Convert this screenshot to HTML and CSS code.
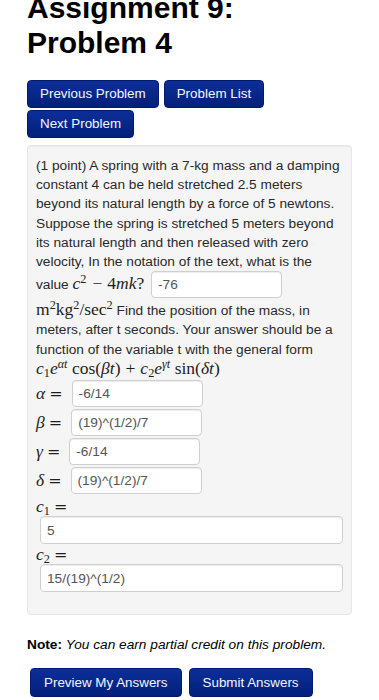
FILE: index.html
```html
<!DOCTYPE html>
<html lang="en">
<head>
<meta charset="utf-8">
<title>Assignment 9: Problem 4</title>
<link rel="stylesheet" href="styles.css">
</head>
<body>
<h1 class="title">Assignment 9:<br>Problem 4</h1>
<div class="nav">
  <button class="btn">Previous Problem</button>
  <button class="btn">Problem List</button>
  <button class="btn">Next Problem</button>
</div>
<div class="panel">
  <p class="q">(1 point) A spring with a 7-kg mass and a damping constant 4 can be held stretched 2.5 meters beyond its natural length by a force of 5 newtons. Suppose the spring is stretched 5 meters beyond its natural length and then released with zero velocity, In the notation of the text, what is the value <span class="m"><i>c</i><sup>2</sup><span class="op op-wide">−</span>4<i>mk</i>?</span> <input class="ans ans-inline" value="-76"> <span class="m">m<sup>2</sup>kg<sup>2</sup>/sec<sup>2</sup></span> Find the position of the mass, in meters, after t seconds. Your answer should be a function of the variable t with the general form <span class="m"><i>c</i><sub>1</sub><i>e</i><sup><i>αt</i></sup> cos(<i>βt</i>)<span class="op">+</span><i>c</i><sub>2</sub><i>e</i><sup><i>γt</i></sup> sin(<i>δt</i>)</span></p>
  <div class="row row-first"><span class="m lbl"><i>α</i><span class="eq">=</span></span><input class="ans ans-short" value="-6/14"></div>
  <div class="row"><span class="m lbl"><i>β</i><span class="eq">=</span></span><input class="ans ans-short" value="(19)^(1/2)/7"></div>
  <div class="row"><span class="m lbl"><i>γ</i><span class="eq">=</span></span><input class="ans ans-short" value="-6/14"></div>
  <div class="row"><span class="m lbl"><i>δ</i><span class="eq">=</span></span><input class="ans ans-short" value="(19)^(1/2)/7"></div>
  <div class="m clabel"><i>c</i><sub>1</sub><span class="eq">=</span></div>
  <input class="ans ans-wide" value="5">
  <div class="m clabel clabel-next"><i>c</i><sub>2</sub><span class="eq">=</span></div>
  <input class="ans ans-wide" value="15/(19)^(1/2)">
</div>
<p class="note"><b>Note:</b> <i>You can earn partial credit on this problem.</i></p>
<div class="actions">
  <button class="btn btn-lg">Preview My Answers</button>
  <button class="btn btn-lg">Submit Answers</button>
</div>
</body>
</html>
```
FILE: styles.css
```css
html, body {
  margin: 0;
  padding: 0;
  background: #ffffff;
}
body {
  padding: 0 27px;
  font-family: "Liberation Sans", Arial, sans-serif;
  font-size: 13.7px;
  line-height: 19.2px;
  color: #333333;
  overflow: hidden;
}
.title {
  margin: -10px 0 0;
  font-size: 30px;
  line-height: 35px;
  font-weight: bold;
  color: #000000;
}
.nav {
  display: flex;
  flex-wrap: wrap;
  gap: 2px 5px;
  margin-top: 20px;
}
.btn {
  height: 28px;
  padding: 0 12px;
  border: 1px solid #011a6b;
  border-radius: 4px;
  background: linear-gradient(to bottom, #0c2e98 0%, #02207a 100%);
  color: #f4f6ff;
  font-family: "Liberation Sans", Arial, sans-serif;
  font-size: 13.4px;
  line-height: 26px;
  cursor: pointer;
}
.panel {
  margin-top: 7px;
  padding: 10px 8px 22px;
  background: #f5f5f5;
  border: 1px solid #e6e6e6;
  border-radius: 4px;
  box-shadow: inset 0 1px 1px rgba(0,0,0,0.04);
}
.q {
  margin: 0;
  color: #2a2a2a;
}
.m {
  font-family: "Liberation Serif", "Times New Roman", serif;
  font-size: 17.5px;
  color: #1e1e1e;
}
.m i {
  font-style: italic;
}
.m sup {
  font-size: 0.7em;
  vertical-align: 0.5em;
  line-height: 0;
}
.m sub {
  font-size: 0.7em;
  vertical-align: -0.25em;
  line-height: 0;
}
.op {
  padding: 0 5px;
}
.op-wide {
  padding: 0 5px 0 6px;
}
.ans {
  box-sizing: border-box;
  height: 27px;
  padding: 0 6px;
  border: 1px solid #cfcfcf;
  border-radius: 4px;
  background: #ffffff;
  box-shadow: inset 0 1px 1px rgba(0,0,0,0.07);
  font-family: "Liberation Sans", Arial, sans-serif;
  font-size: 13.7px;
  color: #555555;
}
.ans-inline {
  width: 131px;
  margin: 0 0 2px 3px;
  vertical-align: baseline;
}
.row {
  display: flex;
  align-items: center;
  margin-top: 2px;
}
.row-first {
  margin-top: 1px;
}
.lbl {
  display: inline-block;
  margin-right: 9px;
  line-height: 19.2px;
}
.eq {
  font-family: "DejaVu Serif", serif;
  font-style: normal;
  font-size: 16px;
  padding-left: 4px;
}
.ans-short {
  width: 131px;
}
.clabel {
  margin-top: 2px;
  line-height: 20px;
  height: 20px;
}
.clabel-next {
  margin-top: 0;
}
.ans-wide {
  display: block;
  width: 303px;
  height: 28px;
  margin-left: 4px;
}
.note {
  margin: 20px 0 0;
  color: #000000;
}
.actions {
  display: flex;
  gap: 7px;
  margin: 14px 0 0 3px;
}
.btn-lg {
  height: 29px;
  padding: 0 13px;
}
```
